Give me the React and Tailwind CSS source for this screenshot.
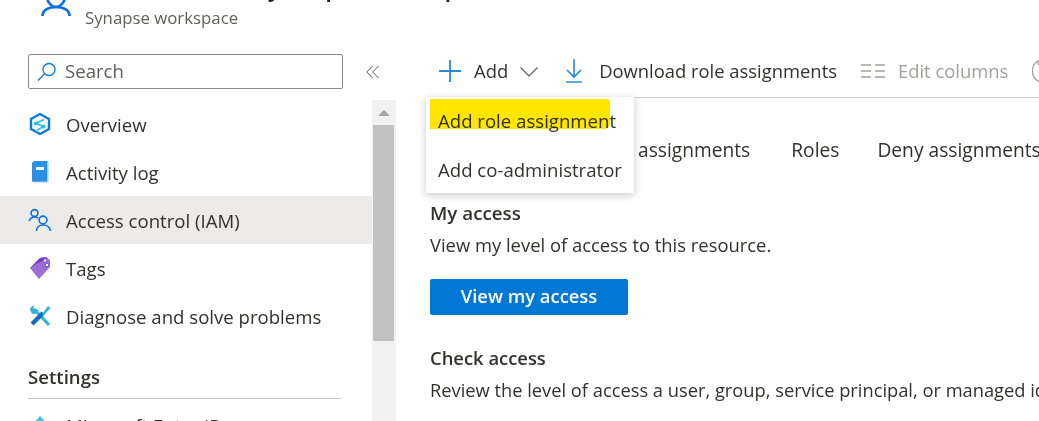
const font = { fontFamily: '"Open Sans", sans-serif' };

function SynapseIcon() {
  return (
    <svg width="22" height="24" viewBox="0 0 22 24" fill="none">
      <path d="M11 2 L20 7 V17 L11 22 L2 17 V7 Z" stroke="#0a7bd1" strokeWidth="2.4" strokeLinejoin="round" />
      <path d="M15 7.5 L6.5 11.5 L15 14.5 L8 18" stroke="#32bedd" strokeWidth="1.8" strokeLinejoin="round" />
      <circle cx="7" cy="11.5" r="2.1" fill="#32bedd" />
      <circle cx="14.5" cy="14.5" r="2.1" fill="#32bedd" />
    </svg>
  );
}

function BookIcon() {
  return (
    <svg width="20" height="24" viewBox="0 0 20 24" fill="none">
      <path d="M2 3 L4 1 H18 V22 H3 L2 21 Z" fill="#2b8fe3" />
      <path d="M17 1.5 H18.6 V22.5 H4 V21.5 H17 Z" fill="#a9d3f2" />
      <rect x="6" y="7" width="8" height="3" fill="#f3f9fd" />
    </svg>
  );
}

function UsersIcon() {
  return (
    <svg width="24" height="24" viewBox="0 0 24 24" fill="none" stroke="#0a6fd8" strokeWidth="1.6">
      <circle cx="6.5" cy="5" r="3.4" />
      <path d="M1 13 C2 10.5 4 9 6.5 9 C8 9 9 9.4 10 10" />
      <circle cx="15" cy="12" r="3.9" />
      <path d="M8.5 23 C8.5 19.5 11 17 15 17 C19 17 22 19.5 22.5 23" />
    </svg>
  );
}

function TagIcon() {
  return (
    <svg width="22" height="24" viewBox="0 0 22 24" fill="none">
      <path d="M1 12 L11 2 L17 1 L21 4 L21 11 L10 23 Z" fill="#9a6fd6" />
      <path d="M1 12 L11 2 L17 1 L18 3 L7 8 Z" fill="#6f3dc8" />
      <circle cx="16" cy="4.5" r="1.7" fill="#fff" stroke="#6f3dc8" strokeWidth="0.8" />
      <circle cx="18" cy="9" r="1.7" fill="#fff" stroke="#6f3dc8" strokeWidth="0.8" />
    </svg>
  );
}

function ToolsIcon() {
  return (
    <svg width="22" height="22" viewBox="0 0 22 22" fill="none">
      <path d="M5 4 L20 20" stroke="#2fb4d8" strokeWidth="3" />
      <path d="M1 5 C1 3 2 1 5 0.5 L4.5 3.5 L6.5 5.5 L9.5 4.5 C9.5 8 6 10 3 8.5 Z" fill="#2fb4d8" />
      <path d="M14 8 L3 19" stroke="#0c6fb8" strokeWidth="4.2" />
      <path d="M13 9 L19 1 L21.5 3 L15 10 Z" fill="#2fb4d8" />
    </svg>
  );
}

const navItems = [
  { label: 'Overview', icon: <SynapseIcon /> },
  { label: 'Activity log', icon: <BookIcon /> },
  { label: 'Access control (IAM)', icon: <UsersIcon />, active: true },
  { label: 'Tags', icon: <TagIcon /> },
  { label: 'Diagnose and solve problems', icon: <ToolsIcon /> },
];

function NavRow({ item }) {
  return (
    <div className={`flex items-center h-[48px] pl-[28px] ${item.active ? 'bg-[#edebe9]' : ''}`}>
      <div className="w-[24px] flex justify-center">{item.icon}</div>
      <span className="ml-[14px] pt-[2px] whitespace-nowrap">{item.label}</span>
    </div>
  );
}

export default function App() {
  return (
    <div style={font} className="relative flex w-[1039px] h-[421px] overflow-hidden bg-white text-[18.6px] text-[#323130]">
      <div className="w-[396px] shrink-0 flex flex-col">
        <div className="h-[54px] relative flex">
          <svg className="ml-[40px] shrink-0" width="32" height="18" viewBox="0 0 32 18" fill="none" stroke="#0a6fe0" strokeWidth="2.6">
            <path d="M2.5 16 C2.5 10.5 8 7 16 7 C24 7 29.5 10.5 29.5 16" />
            <path d="M7 -2 C8 3 12 7 16 7 C20 7 24 3 25 -2" />
          </svg>
          <div className="ml-[13px]">
            <div className="h-[3px] overflow-hidden leading-none">
              <div className="-mt-[27px] text-[24px] font-semibold text-[#201f1e] whitespace-nowrap leading-[28px]">
                contoso-dmo-my-ab-prod-east-pool – Access control (IAM)
              </div>
            </div>
            <div className="mt-[4px] text-[16.8px] leading-[22px] text-[#605e5c] whitespace-nowrap">Synapse workspace</div>
          </div>
        </div>

        <div className="flex items-center h-[35px]">
          <div className="ml-[28px] w-[315px] h-[35px] flex items-center border border-[#8a8886] rounded-[2px]">
            <svg className="ml-[8px]" width="20" height="20" viewBox="0 0 20 20" fill="none" stroke="#0a78d4" strokeWidth="1.3">
              <circle cx="12" cy="7.5" r="6" />
              <path d="M7.5 12 L1 18.5" />
            </svg>
            <span className="ml-[8px] -mt-[2px] text-[#605e5c]">Search</span>
          </div>
          <svg className="ml-[23px]" width="13" height="14" viewBox="0 0 13 14" fill="none" stroke="#605e5c" strokeWidth="1">
            <path d="M6.5 1 L0.8 7 L6.5 13 M12.5 1 L6.8 7 L12.5 13" />
          </svg>
        </div>

        <div className="mt-[11px] flex flex-1 min-h-0">
          <div className="w-[372px] shrink-0">
            {navItems.map((item) => (
              <NavRow key={item.label} item={item} />
            ))}
            <div className="ml-[28px] mr-[31px] h-[59px] border-b border-[#c8c6c4] pt-[25px] font-semibold text-[#323130] leading-[24px]">
              Settings
            </div>
            <div className="flex items-center h-[48px] mt-[3px] pl-[28px]">
              <div className="w-[24px] flex justify-center">
                <svg width="22" height="22" viewBox="0 0 22 22">
                  <path d="M11 1 L21 12 L11 21 L1 12 Z" fill="#37c2f0" />
                </svg>
              </div>
              <span className="ml-[14px]">Microsoft Entra ID</span>
            </div>
          </div>
          <div className="w-[24px] bg-[#f1f1f1] flex flex-col items-center pl-[1px] pr-[2px]">
            <div className="h-[25px] flex items-center justify-center">
              <div className="w-0 h-0 border-x-[6px] border-x-transparent border-b-[6px] border-b-[#a3a3a3]" />
            </div>
            <div className="w-full h-[216px] bg-[#c1c1c1]" />
          </div>
        </div>
      </div>

      <div className="relative ml-[30px] flex-1 min-w-0 pt-[44px]">
        <div className="flex items-center h-[54px] border-b border-[#d2d0ce] whitespace-nowrap text-[18.4px]">
          <svg className="ml-[13px] shrink-0" width="22" height="22" viewBox="0 0 22 22" stroke="#2b88d8" strokeWidth="1.8">
            <path d="M11 0 V22 M0 11 H22" />
          </svg>
          <span className="ml-[13px]">Add</span>
          <svg className="ml-[12px] shrink-0 mt-[2px]" width="18" height="10" viewBox="0 0 18 10" fill="none" stroke="#605e5c" strokeWidth="1.2">
            <path d="M0.5 0.5 L9 9 L17.5 0.5" />
          </svg>
          <svg className="ml-[28px] shrink-0" width="16" height="24" viewBox="0 0 16 24" fill="none" stroke="#2b88d8" strokeWidth="1.6">
            <path d="M8 0 V18 M1 11 L8 18 L15 11 M0 23 H16" />
          </svg>
          <span className="ml-[17px]">Download role assignments</span>
          <svg className="ml-[24px] shrink-0" width="24" height="14" viewBox="0 0 24 14" fill="none" stroke="#a19f9d" strokeWidth="1.3">
            <path d="M0 1 H10 M0 7 H10 M0 13 H10 M14 1 H24 M14 7 H24 M14 13 H24" />
          </svg>
          <span className="ml-[13px] text-[#a19f9d]">Edit columns</span>
          <svg className="ml-[24px] shrink-0" width="26" height="26" viewBox="0 0 26 26" fill="none" stroke="#a19f9d" strokeWidth="1.3">
            <path d="M5.5 3.2 A12 12 0 1 0 12.7 1 M5.5 3.2 L9 1 M5.5 3.2 L6.5 7" />
          </svg>
        </div>

        <div className="flex h-[48px] mt-[28px] pl-[10px] items-center gap-[41px] whitespace-nowrap text-[19.2px]">
          <span>Check access</span>
          <span>Role assignments</span>
          <span>Roles</span>
          <span className="-ml-[3px]">Deny assignments</span>
        </div>

        <div className="pl-[4px] mt-[24px] whitespace-nowrap text-[18.4px]">
          <div className="font-semibold text-[#323130] leading-[30px] text-[18.8px]">My access</div>
          <div className="mt-[1px] leading-[32px]">View my level of access to this resource.</div>
          <div className="mt-[18px] w-[198px] h-[36px] bg-[#0078d4] rounded-[2px] text-white font-semibold flex items-center justify-center pb-[2px]">
            View my access
          </div>
          <div className="mt-[28px] font-semibold leading-[30px]">Check access</div>
          <div className="mt-[1px] leading-[32px] text-[18.3px]">Review the level of access a user, group, service principal, or managed identity has to this resource.</div>
        </div>

        <div className="absolute left-0 top-[97px] w-[208px] h-[96px] bg-white shadow-[0_2px_8px_rgba(0,0,0,0.22)] whitespace-nowrap">
          <div className="flex items-center h-[48px] pl-[12px]">Add role assignment</div>
          <div className="flex items-center h-[48px] pl-[12px] pt-[2px]">Add co-administrator</div>
          <div className="absolute left-[4px] top-[2px] w-[180px] h-[30px] bg-[#ffe600] rounded-tr-[3px] rounded-br-[6px] mix-blend-multiply" />
        </div>
      </div>
    </div>
  );
}
